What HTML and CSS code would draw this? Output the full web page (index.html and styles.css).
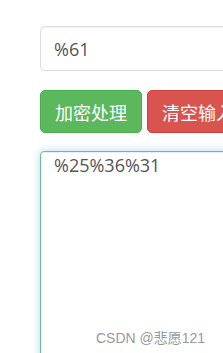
FILE: index.html
```html
<!doctype html>
<html lang="zh-CN">
    <head>
        <meta charset="UTF-8" />
        <meta name="viewport" content="width=device-width, initial-scale=1.0" />
        <title>URL编码</title>
        <link rel="stylesheet" href="styles.css">
    </head>
    <body>
        <div class="page">
            <input type="text" class="form-input" value="%61" />

            <div class="btn-row">
                <button class="btn btn-success">加密处理</button>
                <button class="btn btn-danger">清空输入</button>
            </div>

            <textarea class="result">%25%36%31</textarea>
        </div>

        <div class="watermark">CSDN @悲愿121</div>
    </body>
</html>
```

FILE: styles.css
```css
/* General Styles */
body {
    margin: 0;
    padding: 0;
    background-color: #fff;
    font-family: "Microsoft YaHei", "Noto Sans CJK SC", "Liberation Sans", sans-serif;
    overflow: hidden;
    height: 353px;
    position: relative;
}

.page {
    padding: 26px 0 0 40px;
    width: 320px;
}

.form-input {
    display: block;
    box-sizing: border-box;
    width: 100%;
    height: 45px;
    padding: 8px 13px;
    font-size: 18px;
    font-family: "Open Sans", "Liberation Sans", sans-serif;
    color: #555;
    border: 1px solid #dcdcdc;
    border-radius: 5px;
    box-shadow: inset 0 1px 1px rgba(0, 0, 0, 0.05);
    outline: none;
}

/* Buttons */
.btn-row {
    display: flex;
    gap: 5px;
    margin-top: 19px;
}

.btn {
    height: 43px;
    padding: 0 14px;
    font-size: 18px;
    font-family: "Noto Sans CJK SC", sans-serif;
    color: #fff;
    border: 1px solid transparent;
    border-radius: 5px;
    white-space: nowrap;
    cursor: pointer;
}

.btn-success {
    background-color: #5cb85c;
    border-color: #4cae4c;
}

.btn-danger {
    background-color: #d9534f;
    border-color: #d43f3a;
}

/* Result */
.result {
    display: block;
    box-sizing: border-box;
    width: 100%;
    height: 215px;
    margin-top: 18px;
    padding: 1px 13px;
    font-size: 18px;
    font-family: "Open Sans", "Liberation Sans", sans-serif;
    color: #555;
    border: 1px solid #66c192;
    border-radius: 4px;
    box-shadow: inset 0 1px 1px rgba(0, 0, 0, 0.075), 0 0 8px rgba(102, 175, 233, 0.5);
    outline: none;
    resize: none;
}

.watermark {
    position: absolute;
    left: 96px;
    top: 327px;
    font-size: 14px;
    font-family: "Liberation Sans", "Noto Sans CJK SC", sans-serif;
    color: #999;
}
```
